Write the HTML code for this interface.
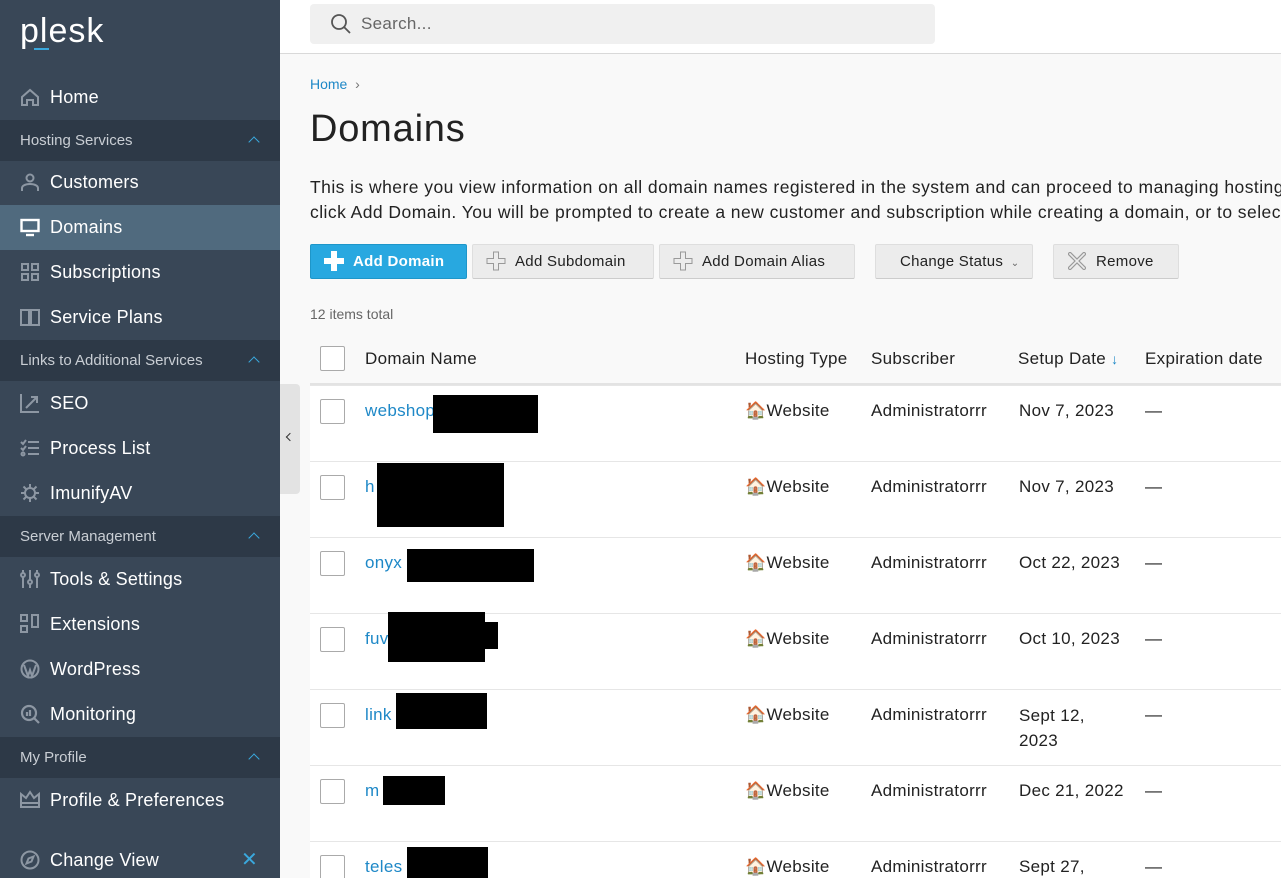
<!DOCTYPE html>
<html><head><meta charset="utf-8"><style>
*{margin:0;padding:0;box-sizing:border-box}
html{width:1281px;height:878px;overflow:hidden}
body{width:1281px;height:878px;overflow:hidden;background:#f9f9f9;font-family:"Liberation Sans",sans-serif;position:relative;color:#222}
.sb{position:absolute;left:0;top:0;width:280px;height:878px;background:#394757}
.it{position:absolute;left:0;width:280px;height:45px;color:#fff;font-size:18px;line-height:45px;padding-left:50px;letter-spacing:0.2px}
.it svg{position:absolute;left:20px;top:12px}
.sec{position:absolute;left:0;width:280px;height:41px;background:#2d3947;color:#c9ced4;font-size:15px;line-height:41px;padding-left:20px}
.sec:after{content:"";position:absolute;right:22px;top:18px;width:7px;height:7px;border-left:1.5px solid #3aa8dd;border-top:1.5px solid #3aa8dd;transform:rotate(45deg)}
.a{position:absolute;font-size:16px;white-space:nowrap}
.btn{position:absolute;top:244px;height:35px;background:#ececec;border:1px solid #dedede;border-bottom-color:#ccc;border-radius:2px;font-size:15px;line-height:33px;color:#222;letter-spacing:0.3px}
.row{position:absolute;left:310px;width:971px;height:76px;background:#fff;border-top:1px solid #e6e6e6;overflow:hidden}
.cb{position:absolute;left:10px;top:13px;width:25px;height:25px;border:1px solid #aaa;border-radius:2px;background:#fff}
.row .a{top:15px;font-size:17px;letter-spacing:0.3px}
.k{position:absolute;background:#000}
</style></head><body>
<div class="sb">
<div style="position:absolute;left:20px;top:12px;color:#fff;font-size:34px;letter-spacing:1px">plesk</div>
<div style="position:absolute;left:34px;top:48px;width:15px;height:2px;background:#3aa8dd"></div>
<div class="it" style="top:75px"><svg width="20" height="20" viewBox="0 0 20 20" fill="none" stroke="#8d97a3" stroke-width="2"><path d="M2 10L10 3l8 7v8h-5v-5H7v5H2z"/></svg>Home</div>
<div class="sec" style="top:120px">Hosting Services</div>
<div class="it" style="top:160px"><svg width="20" height="20" viewBox="0 0 20 20" fill="none" stroke="#8d97a3" stroke-width="2"><circle cx="10" cy="6" r="3.5"/><path d="M2 19v-3c0-2 3-4 8-4s8 2 8 4v3"/></svg>Customers</div>
<div class="it" style="top:205px;background:#506a7e"><svg width="20" height="20" viewBox="0 0 20 20" fill="none" stroke="#fff" stroke-width="2.4"><rect x="1.5" y="3" width="17" height="11"/><path d="M6 18h8"/></svg>Domains</div>
<div class="it" style="top:250px"><svg width="20" height="20" viewBox="0 0 20 20" fill="none" stroke="#8d97a3" stroke-width="2"><rect x="2" y="2" width="6" height="6"/><rect x="12" y="2" width="6" height="6"/><rect x="2" y="12" width="6" height="6"/><rect x="12" y="12" width="6" height="6"/></svg>Subscriptions</div>
<div class="it" style="top:295px"><svg width="20" height="20" viewBox="0 0 20 20" fill="none" stroke="#8d97a3" stroke-width="2"><path d="M1 3h8v15H1zM11 3h8v15h-8z"/></svg>Service Plans</div>
<div class="sec" style="top:340px">Links to Additional Services</div>
<div class="it" style="top:381px"><svg width="20" height="20" viewBox="0 0 20 20" fill="none" stroke="#8d97a3" stroke-width="2"><path d="M1 1v18h18M6 15l10-10M11 4h6v6"/></svg>SEO</div>
<div class="it" style="top:426px"><svg width="20" height="20" viewBox="0 0 20 20" fill="none" stroke="#8d97a3" stroke-width="2"><path d="M8 4h11M8 10h11M8 16h11M1 4l2 2 3-4M1 10l2 2 3-4"/><circle cx="3" cy="16" r="1.5"/></svg>Process List</div>
<div class="it" style="top:471px"><svg width="20" height="20" viewBox="0 0 20 20" fill="none" stroke="#8d97a3" stroke-width="2"><circle cx="10" cy="10" r="5"/><path d="M10 1v4M10 15v4M1 10h4M15 10h4M3.5 3.5l3 3M13.5 13.5l3 3M3.5 16.5l3-3M13.5 6.5l3-3"/></svg>ImunifyAV</div>
<div class="sec" style="top:516px">Server Management</div>
<div class="it" style="top:557px"><svg width="20" height="20" viewBox="0 0 20 20" fill="none" stroke="#8d97a3" stroke-width="2"><path d="M3 1v18M10 1v18M17 1v18"/><circle cx="3" cy="6" r="2" fill="#394757"/><circle cx="10" cy="13" r="2" fill="#394757"/><circle cx="17" cy="6" r="2" fill="#394757"/></svg>Tools &amp; Settings</div>
<div class="it" style="top:602px"><svg width="20" height="20" viewBox="0 0 20 20" fill="none" stroke="#8d97a3" stroke-width="2"><rect x="1" y="1" width="6" height="6"/><rect x="1" y="12" width="6" height="6"/><rect x="12" y="1" width="6" height="12"/></svg>Extensions</div>
<div class="it" style="top:647px"><svg width="20" height="20" viewBox="0 0 20 20" fill="none" stroke="#8d97a3" stroke-width="2"><circle cx="10" cy="10" r="8.5"/><path d="M4 6l4 11 2-6 2 6 4-11"/></svg>WordPress</div>
<div class="it" style="top:692px"><svg width="20" height="20" viewBox="0 0 20 20" fill="none" stroke="#8d97a3" stroke-width="2.2"><circle cx="9" cy="9" r="7"/><path d="M14 14l5 5M7 8v4M10 6v6"/></svg>Monitoring</div>
<div class="sec" style="top:737px">My Profile</div>
<div class="it" style="top:778px"><svg width="20" height="20" viewBox="0 0 20 20" fill="none" stroke="#8d97a3" stroke-width="2"><path d="M1 4l5 4 4-6 4 6 5-4v13H1zM1 13h18"/></svg>Profile &amp; Preferences</div>
<div class="it" style="top:838px"><svg width="20" height="20" viewBox="0 0 20 20" fill="none" stroke="#8d97a3" stroke-width="2"><circle cx="10" cy="10" r="8.5"/><path d="M13.5 6.5l-5 2-2 5 5-2z"/></svg>Change View<span style="position:absolute;right:22px;top:0;color:#3aa8dd;font-size:20px">✕</span></div>
</div>
<div style="position:absolute;left:280px;top:384px;width:20px;height:110px;background:#e3e3e3;border-radius:0 4px 4px 0"></div>
<div style="position:absolute;left:287px;top:434px;width:6px;height:6px;border-left:1.5px solid #333;border-bottom:1.5px solid #333;transform:rotate(45deg)"></div>
<div style="position:absolute;left:280px;top:0;width:1001px;height:54px;background:#fff;border-bottom:1px solid #d9d9d9"></div>
<div style="position:absolute;left:310px;top:4px;width:625px;height:40px;background:#f0f0f0;border-radius:4px"></div>
<svg style="position:absolute;left:330px;top:13px" width="22" height="22" viewBox="0 0 22 22" fill="none" stroke="#555" stroke-width="1.8"><circle cx="9" cy="9" r="7"/><path d="M14 14l6 6"/></svg>
<div class="a" style="left:361px;top:14px;font-size:17px;color:#666;letter-spacing:0.3px">Search...</div>
<div class="a" style="left:310px;top:76px;font-size:14px;color:#1e88c7">Home <span style="color:#777">&nbsp;›</span></div>
<div class="a" style="left:310px;top:108px;font-size:38px;color:#222;letter-spacing:0.8px">Domains</div>
<div class="a" style="left:310px;top:177px;font-size:17.5px;color:#222;letter-spacing:0.45px">This is where you view information on all domain names registered in the system and can proceed to managing hosting</div>
<div class="a" style="left:310px;top:202px;font-size:17.5px;color:#222;letter-spacing:0.45px">click Add Domain. You will be prompted to create a new customer and subscription while creating a domain, or to select</div>
<div class="btn" style="left:310px;width:157px;background:#28a8e0;border-color:#1e96c9;color:#fff;font-weight:bold;padding-left:42px">Add Domain</div>
<div style="position:absolute;left:324px;top:251px;width:20px;height:20px"><div style="position:absolute;left:7px;top:0;width:6px;height:20px;background:#fff"></div><div style="position:absolute;left:0;top:7px;width:20px;height:6px;background:#fff"></div></div>
<div class="btn" style="left:472px;width:182px;padding-left:42px">Add Subdomain</div>
<div class="btn" style="left:659px;width:196px;padding-left:42px">Add Domain Alias</div>
<svg style="position:absolute;left:486px;top:251px" width="20" height="20" viewBox="0 0 20 20" fill="none" stroke="#999"><path d="M7.5 1h5v6.5H19v5h-6.5V19h-5v-6.5H1v-5h6.5z"/></svg>
<svg style="position:absolute;left:673px;top:251px" width="20" height="20" viewBox="0 0 20 20" fill="none" stroke="#999"><path d="M7.5 1h5v6.5H19v5h-6.5V19h-5v-6.5H1v-5h6.5z"/></svg>
<div class="btn" style="left:875px;width:158px;padding-left:24px">Change Status <span style="font-size:10px;color:#666">&nbsp;⌄</span></div>
<div class="btn" style="left:1053px;width:126px;padding-left:42px">Remove</div>
<svg style="position:absolute;left:1068px;top:252px" width="18" height="18" viewBox="0 0 18 18" fill="none" stroke="#999" stroke-width="1.2"><path d="M2 0L9 7 16 0l2 2-7 7 7 7-2 2-7-7-7 7-2-2 7-7-7-7z"/></svg>
<div class="a" style="left:310px;top:306px;font-size:14px;color:#666">12 items total</div>
<div style="position:absolute;left:320px;top:346px;width:25px;height:25px;border:1px solid #aaa;border-radius:2px;background:#fff"></div>
<div class="a" style="left:365px;top:349px;font-size:17px;letter-spacing:0.3px">Domain Name</div>
<div class="a" style="left:745px;top:349px;font-size:17px;letter-spacing:0.3px">Hosting Type</div>
<div class="a" style="left:871px;top:349px;font-size:17px;letter-spacing:0.3px">Subscriber</div>
<div class="a" style="left:1018px;top:349px;font-size:17px;letter-spacing:0.3px">Setup Date <span style="color:#1e88c7;font-size:14px">↓</span></div>
<div class="a" style="left:1145px;top:349px;font-size:17px;letter-spacing:0.3px">Expiration date</div>
<div style="position:absolute;left:310px;top:383px;width:971px;height:2px;background:#e3e3e3"></div>

<div class="row" style="top:385px"><div class="cb"></div><div class="a" style="left:55px;color:#1e88c7">webshop</div><div class="a" style="left:435px">🏠Website</div><div class="a" style="left:561px">Administratorrr</div><div class="a" style="left:709px">Nov 7, 2023</div><div class="a" style="left:835px">—</div></div>
<div class="row" style="top:461px"><div class="cb"></div><div class="a" style="left:55px;color:#1e88c7">h</div><div class="a" style="left:435px">🏠Website</div><div class="a" style="left:561px">Administratorrr</div><div class="a" style="left:709px">Nov 7, 2023</div><div class="a" style="left:835px">—</div></div>
<div class="row" style="top:537px"><div class="cb"></div><div class="a" style="left:55px;color:#1e88c7">onyx</div><div class="a" style="left:435px">🏠Website</div><div class="a" style="left:561px">Administratorrr</div><div class="a" style="left:709px">Oct 22, 2023</div><div class="a" style="left:835px">—</div></div>
<div class="row" style="top:613px"><div class="cb"></div><div class="a" style="left:55px;color:#1e88c7">fuv</div><div class="a" style="left:435px">🏠Website</div><div class="a" style="left:561px">Administratorrr</div><div class="a" style="left:709px">Oct 10, 2023</div><div class="a" style="left:835px">—</div></div>
<div class="row" style="top:689px"><div class="cb"></div><div class="a" style="left:55px;color:#1e88c7">link</div><div class="a" style="left:435px">🏠Website</div><div class="a" style="left:561px">Administratorrr</div><div class="a" style="left:709px;line-height:25px;top:13px">Sept 12,<br>2023</div><div class="a" style="left:835px">—</div></div>
<div class="row" style="top:765px"><div class="cb"></div><div class="a" style="left:55px;color:#1e88c7">m</div><div class="a" style="left:435px">🏠Website</div><div class="a" style="left:561px">Administratorrr</div><div class="a" style="left:709px">Dec 21, 2022</div><div class="a" style="left:835px">—</div></div>
<div class="row" style="top:841px;height:37px"><div class="cb"></div><div class="a" style="left:55px;color:#1e88c7">teles</div><div class="a" style="left:435px">🏠Website</div><div class="a" style="left:561px">Administratorrr</div><div class="a" style="left:709px">Sept 27,</div><div class="a" style="left:835px">—</div></div>

<div class="k" style="left:433px;top:395px;width:105px;height:38px"></div>
<div class="k" style="left:377px;top:463px;width:127px;height:64px"></div>
<div class="k" style="left:407px;top:549px;width:127px;height:33px"></div>
<div class="k" style="left:388px;top:612px;width:97px;height:50px"></div>
<div class="k" style="left:485px;top:622px;width:13px;height:27px"></div>
<div class="k" style="left:396px;top:693px;width:91px;height:36px"></div>
<div class="k" style="left:383px;top:776px;width:62px;height:29px"></div>
<div class="k" style="left:407px;top:847px;width:81px;height:31px"></div>
</body></html>
